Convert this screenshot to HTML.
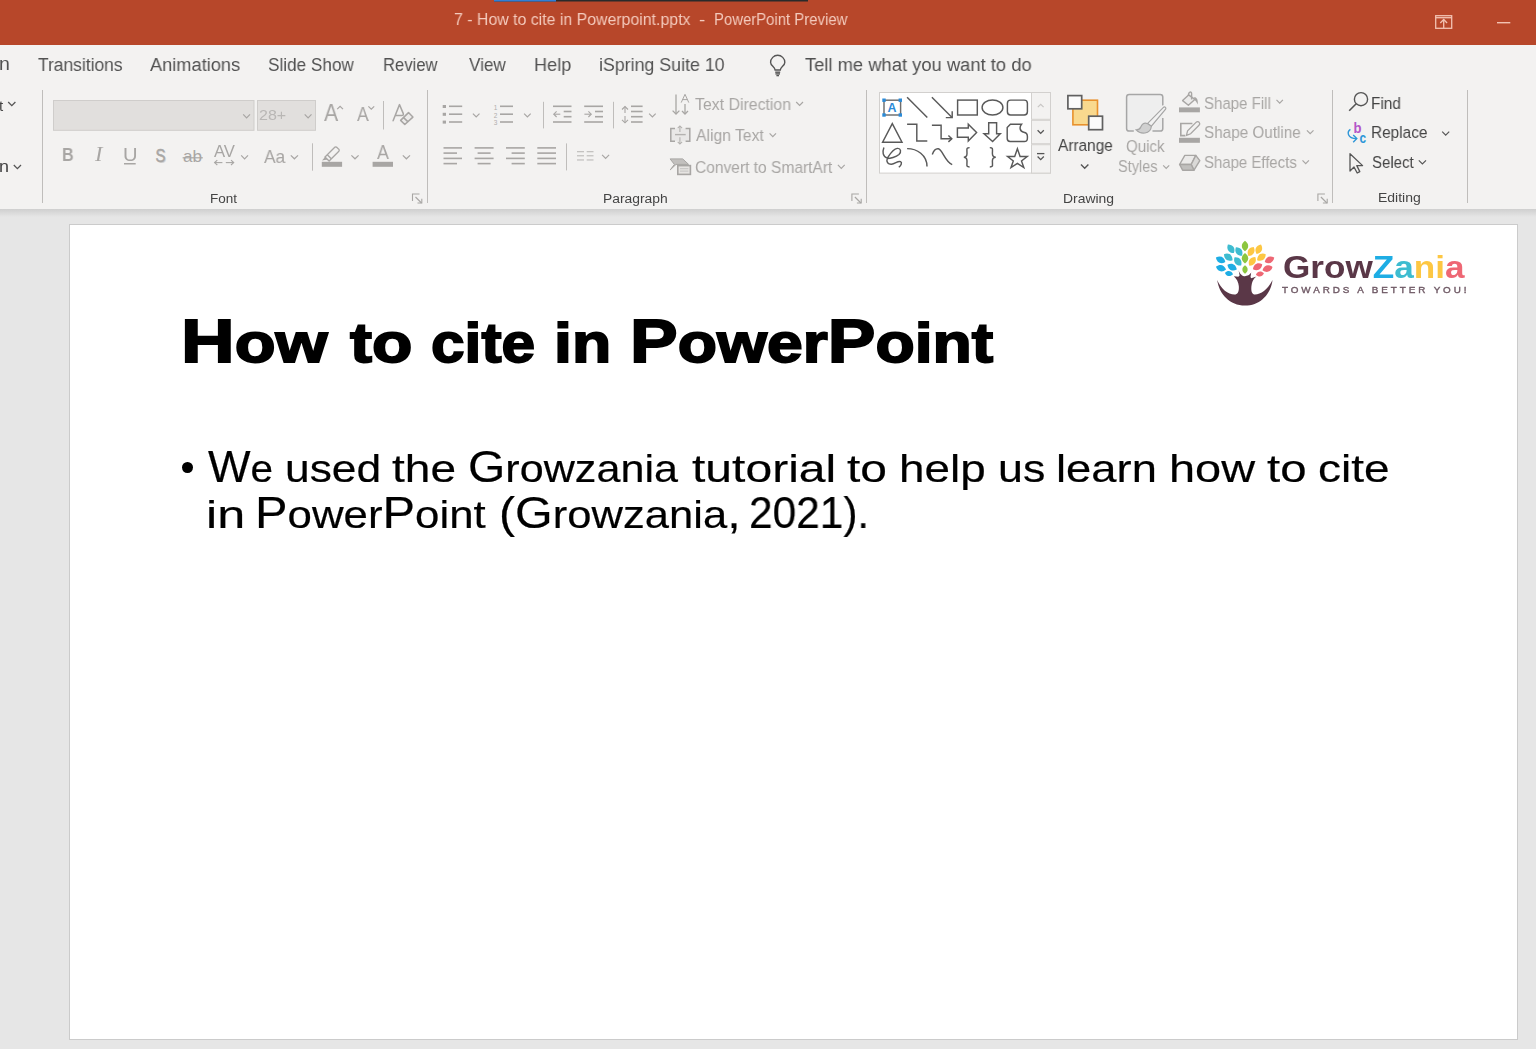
<!DOCTYPE html>
<html><head><meta charset="utf-8">
<style>
*{margin:0;padding:0;box-sizing:border-box}
html,body{width:1536px;height:1049px;overflow:hidden;background:#e6e6e6;font-family:"Liberation Sans",sans-serif}
.abs{position:absolute}
.t{position:absolute;white-space:nowrap;transform-origin:0 0;will-change:transform}
#title{left:0;top:0;width:1536px;height:45px;background:#b7472a}
#ribbon{left:0;top:45px;width:1536px;height:164px;background:#f3f2f1}
#shadow{left:0;top:209px;width:1536px;height:8px;background:linear-gradient(#cfcfcf,#e6e6e6)}
#slide{left:69px;top:224px;width:1449px;height:816px;background:#fff;border:1px solid #cbcbcb}
svg{position:absolute;left:0;top:0}
</style></head><body>
<div id="title" class="abs"></div>
<div id="ribbon" class="abs"></div>
<div id="shadow" class="abs"></div>
<div id="slide" class="abs"></div>
<svg width="1536" height="220" viewBox="0 0 1536 220">
<!-- title bar accents -->
<rect x="494" y="0" width="314" height="1.5" fill="#2a2a2a"/>
<rect x="494" y="0" width="62" height="1.5" fill="#2f7fd6"/>
<!-- title bar right icons -->
<g fill="none" stroke="#f2c2b2" stroke-width="1.3">
<rect x="1435.7" y="15.7" width="16" height="12.6"/>
<line x1="1435.7" y1="17.7" x2="1451.7" y2="17.7"/>
<line x1="1443.7" y1="28" x2="1443.7" y2="19.5"/>
<polyline points="1440.3,23 1443.7,19.5 1447.1,23"/>
</g>
<rect x="1497" y="22" width="13.3" height="1.4" fill="#f2c2b2"/>
<!-- separators -->
<g fill="#bfbdbb">
<rect x="42" y="90" width="1" height="113"/>
<rect x="427" y="90" width="1" height="113"/>
<rect x="866" y="90" width="1" height="113"/>
<rect x="1332" y="90" width="1" height="113"/>
<rect x="1467" y="90" width="1" height="113"/>
<rect x="383" y="101" width="1" height="28.5"/>
<rect x="312" y="143.3" width="1" height="27.4"/>
<rect x="543" y="101.8" width="1" height="26.6"/>
<rect x="613" y="101.8" width="1" height="26.6"/>
<rect x="566" y="143.4" width="1" height="27"/>
</g>
<!-- lightbulb -->
<g fill="none" stroke="#555" stroke-width="1.4">
<path d="M775.1,70 C774.8,67 770.6,65.4 770.6,62.4 A7.1,7.1 0 1 1 784.8,62.4 C784.8,65.4 780.6,67 780.3,70 Z"/>
<line x1="775.2" y1="72.2" x2="780.2" y2="72.2"/>
<line x1="775.4" y1="73.9" x2="780" y2="73.9"/>
<line x1="776.4" y1="75.6" x2="779" y2="75.6"/>
</g>
<!-- left partial chevrons -->
<g fill="none" stroke="#555" stroke-width="1.3">
<polyline points="8.2,102 11.8,105.6 15.4,102"/>
<polyline points="13.8,165 17.4,168.6 21,165"/>
</g>
<!-- font comboboxes -->
<rect x="53.5" y="100.5" width="200.5" height="29.8" fill="#e1dfdd" stroke="#cfcdcb" stroke-width="1"/>
<rect x="257.5" y="100.5" width="58" height="29.8" fill="#e1dfdd" stroke="#cfcdcb" stroke-width="1"/>
<g fill="none" stroke="#a8a6a4" stroke-width="1.2">
<polyline points="243.2,114.4 246.6,117.8 250,114.4"/>
<polyline points="304.7,114.4 308.1,117.8 311.5,114.4"/>
<!-- grow / shrink carets -->
<polyline points="337.2,109.2 340.1,106.3 343,109.2"/>
<polyline points="368.4,106.3 371.3,109.2 374.2,106.3"/>
<!-- chevrons row 2 -->
<polyline points="241.2,155.4 244.6,158.8 248,155.4"/>
<polyline points="290.8,155.4 294.4,158.8 298,155.4"/>
<polyline points="351.4,155.4 355,158.8 358.6,155.4"/>
<polyline points="402.8,155.4 406.4,158.8 410,155.4"/>
</g>
<!-- clear formatting -->
<g fill="none" stroke="#a8a6a4" stroke-width="1.5" stroke-linejoin="round" stroke-linecap="round">
<path d="M393.1,120.7 L399.5,104.6 L403.3,113.6 Q403.8,115.4 401.8,115.4 L395.7,115.4"/>
<path d="M408.5,112.6 L412.9,117.1 L404.8,124.5 L400.6,120.4 Z" fill="#ecebea"/>
<line x1="403.6" y1="117.6" x2="407.8" y2="121.6"/>
</g>
<!-- underline for U -->
<rect x="124" y="163" width="11.7" height="1.5" fill="#a8a6a4"/>
<!-- S with shadow -->
<text x="156.6" y="162.8" font-family="Liberation Sans" font-size="18.5" fill="#d6d4d2" textLength="10" lengthAdjust="spacingAndGlyphs">S</text>
<text x="155.6" y="161.6" font-family="Liberation Sans" font-size="18.5" fill="#a8a6a4" stroke="#a8a6a4" stroke-width="0.5" textLength="10" lengthAdjust="spacingAndGlyphs">S</text>
<!-- ab strike -->
<text x="183" y="161.5" font-family="Liberation Sans" font-size="17" fill="#a8a6a4" textLength="19" lengthAdjust="spacingAndGlyphs">ab</text>
<rect x="182.6" y="157.2" width="20.2" height="1.2" fill="#a8a6a4"/>
<!-- AV arrows -->
<g fill="none" stroke="#a8a6a4" stroke-width="1.1">
<line x1="214.5" y1="162.6" x2="222.4" y2="162.6"/>
<line x1="225.8" y1="162.6" x2="233.8" y2="162.6"/>
<polyline points="217.3,160.2 214.6,162.6 217.3,165"/>
<polyline points="231,160.2 233.7,162.6 231,165"/>
</g>
<!-- highlighter -->
<g fill="none" stroke="#a8a6a4" stroke-width="1.3">
<path d="M325,157 L334.5,147.5 A1.6,1.6 0 0 1 337,147.5 L338.6,149.1 A1.6,1.6 0 0 1 338.6,151.6 L329.1,161 Z"/>
<line x1="327.3" y1="154.8" x2="331.3" y2="158.8"/>
</g>
<path d="M322,160.5 L325,157 L327.7,159.6 Z" fill="#a8a6a4"/>
<rect x="321.8" y="161.8" width="20.3" height="5" fill="#a8a6a4"/>
<rect x="372.6" y="161.8" width="20.4" height="5" fill="#a8a6a4"/>
<!-- dialog launchers -->
<g fill="none" stroke="#a8a6a4" stroke-width="1.1">
<polyline points="412.5,201 412.5,194 419.5,194"/>
<line x1="415.5" y1="197" x2="421.5" y2="203"/>
<polyline points="417.5,203 421.8,203 421.8,198.7"/>
<polyline points="851.9,201 851.9,194 858.9,194"/>
<line x1="854.9" y1="197" x2="860.9" y2="203"/>
<polyline points="856.9,203 861.2,203 861.2,198.7"/>
<polyline points="1317.9,201 1317.9,194 1324.9,194"/>
<line x1="1320.9" y1="197" x2="1326.9" y2="203"/>
<polyline points="1322.9,203 1327.2,203 1327.2,198.7"/>
</g>

<!-- paragraph group -->
<g fill="#a8a6a4">
<!-- bullets -->
<rect x="442.7" y="105" width="3.3" height="3" /><rect x="442.7" y="112.8" width="3.3" height="3" /><rect x="442.7" y="120.6" width="3.3" height="3" />
<rect x="449" y="105.5" width="13.2" height="1.6"/><rect x="449" y="113.4" width="13.2" height="1.6"/><rect x="449" y="121.2" width="13.2" height="1.6"/>
<!-- numbering -->
<rect x="500" y="105.5" width="13" height="1.6"/><rect x="500" y="113.4" width="13" height="1.6"/><rect x="500" y="121.2" width="13" height="1.6"/>
<!-- decrease indent -->
<rect x="553" y="105.5" width="18.5" height="1.6"/><rect x="563.7" y="110.7" width="7.8" height="1.6"/><rect x="563.7" y="115.9" width="7.8" height="1.6"/><rect x="553" y="121.2" width="18.5" height="1.6"/>
<!-- increase indent -->
<rect x="584.2" y="105.5" width="18.8" height="1.6"/><rect x="595" y="110.7" width="8" height="1.6"/><rect x="595" y="115.9" width="8" height="1.6"/><rect x="584.2" y="121.2" width="18.8" height="1.6"/>
<!-- line spacing lines -->
<rect x="631" y="105.5" width="11.6" height="1.6"/><rect x="631" y="110.7" width="11.6" height="1.6"/><rect x="631" y="115.9" width="11.6" height="1.6"/><rect x="631" y="121.2" width="11.6" height="1.6"/>
<!-- align left -->
<rect x="443.5" y="147.1" width="18.5" height="1.6"/><rect x="443.5" y="152.3" width="13.5" height="1.6"/><rect x="443.5" y="157.6" width="18.5" height="1.6"/><rect x="443.5" y="162.8" width="13.5" height="1.6"/>
<!-- center -->
<rect x="474.6" y="147.1" width="19" height="1.6"/><rect x="477.6" y="152.3" width="13" height="1.6"/><rect x="474.6" y="157.6" width="19" height="1.6"/><rect x="477.6" y="162.8" width="13" height="1.6"/>
<!-- right -->
<rect x="506" y="147.1" width="18.8" height="1.6"/><rect x="511.6" y="152.3" width="13.2" height="1.6"/><rect x="506" y="157.6" width="18.8" height="1.6"/><rect x="511.6" y="162.8" width="13.2" height="1.6"/>
<!-- justify -->
<rect x="537.3" y="147.1" width="18.7" height="1.6"/><rect x="537.3" y="152.3" width="18.7" height="1.6"/><rect x="537.3" y="157.6" width="18.7" height="1.6"/><rect x="537.3" y="162.8" width="18.7" height="1.6"/>
</g>
<g fill="#c4c2c0">
<!-- columns -->
<rect x="577" y="151" width="7" height="1.3"/><rect x="586.7" y="151" width="6.8" height="1.3"/>
<rect x="577" y="155.1" width="7" height="1.3"/><rect x="586.7" y="155.1" width="6.8" height="1.3"/>
<rect x="577" y="159.3" width="7" height="1.3"/><rect x="586.7" y="159.3" width="6.8" height="1.3"/>
</g>
<g font-family="Liberation Sans" font-size="6.5" fill="#b0aeac">
<text x="493.8" y="110">1</text><text x="493.8" y="117.8">2</text><text x="493.8" y="125.4">3</text>
</g>
<g fill="none" stroke="#a8a6a4" stroke-width="1.2">
<polyline points="472.9,113.6 476.2,116.9 479.5,113.6"/>
<polyline points="524.1,113.6 527.4,116.9 530.7,113.6"/>
<polyline points="649.1,113.6 652.4,116.9 655.7,113.6"/>
<polyline points="602.1,154.8 605.6,158.3 609.1,154.8"/>
<polyline points="796.2,102 799.6,105.4 803,102"/>
<polyline points="769.6,133.3 772.8,136.6 776,133.3"/>
<polyline points="837.9,164.9 841.3,168.3 844.7,164.9"/>
</g>
<g fill="none" stroke="#a8a6a4" stroke-width="1.1">
<!-- decrease indent arrow -->
<line x1="553.8" y1="114.2" x2="560.3" y2="114.2"/><polyline points="556.6,111.4 553.8,114.2 556.6,117"/>
<!-- increase indent arrow -->
<line x1="584.4" y1="114.2" x2="591.2" y2="114.2"/><polyline points="588.4,111.4 591.2,114.2 588.4,117"/>
<!-- line spacing arrows -->
<line x1="625" y1="106.5" x2="625" y2="113"/><line x1="625" y1="116" x2="625" y2="122.8"/><polyline points="622,109.5 625,106.5 628,109.5"/><polyline points="622,119.8 625,122.8 628,119.8"/>
</g>
<!-- text direction icon -->
<g fill="none" stroke="#a8a6a4" stroke-width="1.3">
<line x1="676" y1="94.5" x2="676" y2="114"/><polyline points="672.6,110.6 676,114 679.4,110.6"/>
<line x1="685" y1="104" x2="685" y2="114"/><polyline points="682,111 685,114 688,111"/>
<path d="M681.2,102.6 L685,94.3 L688.8,102.6 M682.6,99.6 L687.4,99.6" stroke-width="1"/>
</g>
<!-- align text icon -->
<rect x="670.8" y="128.4" width="19" height="12.8" fill="#e9e8e7"/>
<g fill="none" stroke="#a8a6a4" stroke-width="1.5">
<polyline points="675,128.4 670.8,128.4 670.8,141.2 675,141.2"/>
<polyline points="685.6,128.4 689.8,128.4 689.8,141.2 685.6,141.2"/>
</g>
<g fill="none" stroke="#b4b2b0" stroke-width="1.1">
<line x1="675" y1="134.6" x2="685.7" y2="134.6" stroke-width="1.4"/>
<line x1="679.9" y1="126" x2="679.9" y2="132"/>
<line x1="679.9" y1="137.2" x2="679.9" y2="144"/>
<polyline points="677.7,128.2 679.9,126 682.1,128.2"/>
<polyline points="677.7,141.8 679.9,144 682.1,141.8"/>
</g>
<!-- smartart icon -->
<path d="M670.1,158.9 L682.7,158.9 L688.6,164.4 L676,164.4 L670.3,169.8 L674.4,164.4 Z" fill="#c2c0be" stroke="#a8a6a4" stroke-width="1" stroke-linejoin="round"/>
<rect x="677.8" y="165.6" width="12.6" height="8.8" fill="#e6e4e2" stroke="#a8a6a4" stroke-width="1.6"/>
<rect x="680" y="168.2" width="8.4" height="1" fill="#c4c2c0"/><rect x="680" y="170.6" width="8.4" height="1" fill="#c4c2c0"/>
<!-- drawing gallery -->
<rect x="879.5" y="92.5" width="171" height="80.6" fill="#ffffff" stroke="#d2d0ce" stroke-width="1"/>
<rect x="1031.5" y="92.5" width="19" height="26.8" fill="#f3f2f1" stroke="#d2d0ce" stroke-width="1"/>
<rect x="1031.5" y="120.3" width="19" height="23.4" fill="#f3f2f1" stroke="#d2d0ce" stroke-width="1"/>
<rect x="1031.5" y="144.7" width="19" height="28.4" fill="#f3f2f1" stroke="#d2d0ce" stroke-width="1"/>
<g fill="none" stroke="#c8c6c4" stroke-width="1.2"><polyline points="1037.8,107.2 1040.7,104.3 1043.6,107.2"/></g>
<g fill="none" stroke="#555" stroke-width="1.3">
<polyline points="1037.6,130.3 1040.7,133.4 1043.8,130.3"/>
<line x1="1037" y1="153.6" x2="1044.4" y2="153.6"/>
<polyline points="1037.6,156.5 1040.7,159.6 1043.8,156.5"/>
</g>
<g transform="translate(879,92)" fill="none" stroke="#595959" stroke-width="1.45" stroke-linejoin="miter">
<!-- row 1 -->
<rect x="5" y="8.2" width="16.6" height="14.8" stroke="#6d6d6d"/>
<line x1="28.1" y1="5.3" x2="48.3" y2="25.5"/>
<line x1="52.9" y1="5.3" x2="72.8" y2="25.2"/>
<polyline points="66.8,25.6 73.2,25.6 73.2,19.2" />
<rect x="78.6" y="8.1" width="19.7" height="14.9"/>
<ellipse cx="113.5" cy="15.5" rx="10.4" ry="7.5"/>
<rect x="128.4" y="8.1" width="20" height="14.9" rx="3.2"/>
<!-- row 2 -->
<path d="M13.3,31.6 L23,50.2 L3.6,50.2 Z"/>
<polyline points="28.1,32.2 37.8,32.2 37.8,49 48.3,49"/>
<polyline points="52.9,33.2 62.1,33.2 62.1,46.7 72.8,46.7"/>
<polyline points="69.4,43.5 72.8,46.7 69.4,49.9"/>
<path d="M78.4,36 L89.3,36 L89.3,32.2 L97.6,40.6 L89.3,49 L89.3,45.2 L78.4,45.2 Z"/>
<path d="M109.7,30.8 L117.6,30.8 L117.6,41.8 L121.3,41.8 L113.6,49.6 L105,41.8 L109.7,41.8 Z"/>
<path d="M131.4,32.2 L142.5,32.2 C140.2,35 140.6,39.6 144.8,40.2 C147.6,40.6 148.4,42.4 148.4,44.5 L148.4,46.2 C148.4,48 147.3,49.5 145.3,49.5 L131.1,49.5 C129.3,49.5 128.2,48.5 128.2,46.3 L128.2,35.6 Z"/>
<!-- row 3 -->
<path d="M4.9,55.6 C3.3,60 3.6,64.5 8.3,66.1 C11,62 14,57 18.2,56.4 C22,56 22.5,60 20,62.5 C17,65 11,66.5 8.3,66.6 C7,70 9,72.5 12.5,72.3 C16,72 19,68.5 21.5,69.6 C23.5,70.6 22,73.5 19.8,75.2"/>
<path d="M28.1,56.6 C38,56.6 48,63 48,74.5"/>
<path d="M53.3,62.5 C55,57.5 57.5,56.6 59.3,56.8 C63.5,57.5 66,70 73.2,72.6"/>
<path d="M90.6,55.6 C87,55.6 88,57 88,61.5 C88,64.5 87,65.2 84.8,65.2 C87,65.2 88,66 88,69 C88,73.6 87,75 90.6,75"/>
<path d="M110.8,55.6 C114.4,55.6 113.4,57 113.4,61.5 C113.4,64.5 114.4,65.2 116.8,65.2 C114.4,65.2 113.4,66 113.4,69 C113.4,73.6 114.4,75 110.8,75"/>
<path d="M138.4,56.8 L141.1,64.5 L148.2,64.5 L142.5,68.9 L144.8,75.6 L138.4,71.4 L132,75.6 L134.3,68.9 L128.6,64.5 L135.7,64.5 Z"/>
</g>
<!-- text box handles & A -->
<g fill="#2a8ad8">
<rect x="882.3" y="98.5" width="3.4" height="3.4"/><rect x="898.6" y="98.5" width="3.4" height="3.4"/>
<rect x="882.3" y="113.3" width="3.4" height="3.4"/><rect x="898.6" y="113.3" width="3.4" height="3.4"/>
</g>
<text x="887.6" y="111.9" font-family="Liberation Sans" font-weight="bold" font-size="12" fill="#2a8ad8" textLength="9" lengthAdjust="spacingAndGlyphs">A</text>
<!-- arrange icon -->
<rect x="1072.9" y="100.2" width="24.6" height="24.6" fill="#f9d98e" stroke="#e8912d" stroke-width="1.6"/>
<rect x="1067.9" y="95.6" width="13.8" height="13.2" fill="#fbfbfb" stroke="#606060" stroke-width="1.7"/>
<rect x="1088.7" y="116.2" width="13.8" height="13.5" fill="#fbfbfb" stroke="#606060" stroke-width="1.7"/>
<g fill="none" stroke="#555" stroke-width="1.4"><polyline points="1081,164.6 1084.7,168.3 1088.4,164.6"/></g>
<!-- quick styles -->
<rect x="1126.6" y="94.4" width="36.2" height="36.6" rx="2.6" fill="#eeeeee"/>
<path d="M1162.8,105.6 L1162.8,97 Q1162.8,94.4 1160.2,94.4 L1129.2,94.4 Q1126.6,94.4 1126.6,97 L1126.6,128.4 Q1126.6,131 1129.2,131 L1133.8,131 M1152.5,131 L1160.2,131 Q1162.8,131 1162.8,128.4 L1162.8,118.1" fill="none" stroke="#a6a6a6" stroke-width="1.5"/>
<path d="M1147.4,123.6 L1163.2,107.6 C1164.6,106.2 1166.6,107.4 1165.6,109.2 L1151.4,126.2 Z" fill="none" stroke="#f3f2f1" stroke-width="3.2"/>
<path d="M1147.4,123.6 L1163.2,107.6 C1164.6,106.2 1166.6,107.4 1165.6,109.2 L1151.4,126.2 Z" fill="#f2f2f2" stroke="#a6a6a6" stroke-width="1.2"/>
<path d="M1147.4,123.6 C1144,122.2 1141.8,124.4 1140.8,127 C1140,129 1138.6,129.8 1136.2,129.9 C1138.6,132.6 1142,133.4 1145,133 C1148.6,132.4 1151,129.8 1151.4,126.2 Z" fill="#d0d0d0" stroke="#a6a6a6" stroke-width="1.2"/>
<g fill="none" stroke="#a8a6a4" stroke-width="1.2">
<polyline points="1163.2,165.4 1166.2,168.4 1169.2,165.4"/>
<polyline points="1276.5,99.9 1279.7,103.1 1282.9,99.9"/>
<polyline points="1306.9,130.3 1310.2,133.6 1313.5,130.3"/>
<polyline points="1302.5,160.3 1305.7,163.6 1308.9,160.3"/>
</g>
<!-- shape fill icon -->
<g fill="none" stroke="#a8a6a4" stroke-width="1.4" stroke-linejoin="round">
<path d="M1182.6,100.6 L1188.6,94.9 L1194.8,99.4 L1188.4,105.3 Z" fill="#ecebea"/>
<path d="M1188.4,95.6 C1188.4,91.2 1191.6,91.2 1191.6,93.6 L1191.6,99.4"/>
</g>
<path d="M1194.2,97 C1197.2,97.4 1198.2,100.4 1197.8,104.6 C1196.8,102.2 1195.2,100.8 1194.4,99.6 Z" fill="#a8a6a4"/>
<rect x="1179" y="107.4" width="20.9" height="4.9" fill="#a8a6a4"/>
<!-- shape outline icon -->
<g fill="none" stroke="#a8a6a4" stroke-width="1.3">
<polyline points="1192.4,123.5 1180.8,123.5 1180.8,135.6 1185.2,135.6" stroke-width="1.6"/>
<path d="M1186.4,135.4 L1187.6,130.8 L1196,122.4 C1197,121.4 1198.4,121.4 1199.2,122.4 C1200,123.3 1199.9,124.4 1199,125.3 L1190.6,133.8 Z"/>
</g>
<rect x="1179" y="137.8" width="20.9" height="5" fill="#a8a6a4"/>
<!-- shape effects icon -->
<g stroke="#a8a6a4" stroke-width="1.4" stroke-linejoin="round">
<path d="M1179.6,164.5 L1184.8,155.4 L1195.8,155.4 L1191.2,164.5 Z" fill="#ebeae9"/>
<path d="M1191.2,164.5 L1195.8,155.4 L1199.8,160.6 L1194,170.2 Z" fill="#dad9d7"/>
<path d="M1179.6,164.5 L1191.2,164.5 L1194,170.2 L1182.6,170.2 Z" fill="#c0bfbd"/>
</g>

<!-- editing icons -->
<g fill="none" stroke="#555" stroke-width="1.4">
<circle cx="1361" cy="99.2" r="6.6"/>
<line x1="1349.2" y1="110.8" x2="1356.2" y2="103.8" stroke-width="1.6"/>
</g>
<text x="1353.6" y="132.6" font-family="Liberation Sans" font-weight="bold" font-size="14" fill="#b455c8" textLength="8" lengthAdjust="spacingAndGlyphs">b</text>
<text x="1359.4" y="143" font-family="Liberation Sans" font-weight="bold" font-size="15.5" fill="#2e96d8" textLength="6.6" lengthAdjust="spacingAndGlyphs">c</text>
<g fill="none" stroke="#2e96d8" stroke-width="1.4">
<path d="M1350.4,129.4 C1347,131.5 1346.8,138.6 1356.6,138.6"/>
<polyline points="1353.2,135 1356.8,138.6 1353.2,142.2"/>
</g>
<g fill="none" stroke="#555" stroke-width="1.2"><polyline points="1442.2,131.6 1445.7,135.1 1449.2,131.6"/>
<polyline points="1418.8,160.3 1422.4,163.9 1426,160.3"/></g>
<path d="M1350,153.8 L1350,171 L1354,167 L1357.2,173 L1359.8,171.6 L1356.8,165.6 L1362.6,165.6 Z" fill="#f3f2f1" stroke="#555" stroke-width="1.3" stroke-linejoin="round"/>
</svg>

<svg width="80" height="80" viewBox="0 0 80 80" style="left:1205px;top:232px"><path d="M0,-5.4 C4.73,-2.43 4.73,2.43 0,5.4 C-4.73,2.43 -4.73,-2.43 0,-5.4 Z" transform="translate(40 14.1) rotate(0) scale(0.9 0.97)" fill="#8cc63f"/><path d="M0,-5.4 C4.73,-2.43 4.73,2.43 0,5.4 C-4.73,2.43 -4.73,-2.43 0,-5.4 Z" transform="translate(40 26.3) rotate(0) scale(0.9 0.97)" fill="#8cc63f"/><path d="M0,-4.4 C3.92,-1.98 3.92,1.98 0,4.4 C-3.92,1.98 -3.92,-1.98 0,-4.4 Z" transform="translate(40 37.4) rotate(0) scale(0.9 0.97)" fill="#8cc63f"/><path d="M0,-5.4 C4.73,-2.43 4.73,2.43 0,5.4 C-4.73,2.43 -4.73,-2.43 0,-5.4 Z" transform="translate(25.9 16.8) rotate(-35) scale(0.9 0.97)" fill="#3ebcd0"/><path d="M0,-5.4 C4.73,-2.43 4.73,2.43 0,5.4 C-4.73,2.43 -4.73,-2.43 0,-5.4 Z" transform="translate(33.9 19.5) rotate(-35) scale(0.9 0.97)" fill="#3ebcd0"/><path d="M0,-5.4 C4.73,-2.43 4.73,2.43 0,5.4 C-4.73,2.43 -4.73,-2.43 0,-5.4 Z" transform="translate(23.3 25.2) rotate(-55) scale(0.9 0.97)" fill="#3ebcd0"/><path d="M0,-5.4 C4.73,-2.43 4.73,2.43 0,5.4 C-4.73,2.43 -4.73,-2.43 0,-5.4 Z" transform="translate(32.8 29.4) rotate(-40) scale(0.9 0.97)" fill="#3ebcd0"/><path d="M0,-5.4 C4.73,-2.43 4.73,2.43 0,5.4 C-4.73,2.43 -4.73,-2.43 0,-5.4 Z" transform="translate(15.6 27.8) rotate(-65) scale(0.9 0.97)" fill="#1eade4"/><path d="M0,-5.4 C4.73,-2.43 4.73,2.43 0,5.4 C-4.73,2.43 -4.73,-2.43 0,-5.4 Z" transform="translate(16 36.2) rotate(-75) scale(0.9 0.97)" fill="#1eade4"/><path d="M0,-5.4 C4.73,-2.43 4.73,2.43 0,5.4 C-4.73,2.43 -4.73,-2.43 0,-5.4 Z" transform="translate(27.1 35.1) rotate(-62) scale(0.9 0.97)" fill="#1eade4"/><path d="M0,-4.2 C3.65,-1.89 3.65,1.89 0,4.2 C-3.65,1.89 -3.65,-1.89 0,-4.2 Z" transform="translate(24 41.6) rotate(-80) scale(0.9 0.97)" fill="#1eade4"/><path d="M0,-5.4 C4.73,-2.43 4.73,2.43 0,5.4 C-4.73,2.43 -4.73,-2.43 0,-5.4 Z" transform="translate(46.1 19.5) rotate(30) scale(0.9 0.97)" fill="#fdc743"/><path d="M0,-5.4 C4.73,-2.43 4.73,2.43 0,5.4 C-4.73,2.43 -4.73,-2.43 0,-5.4 Z" transform="translate(53.8 17.2) rotate(25) scale(0.9 0.97)" fill="#fdc743"/><path d="M0,-5.4 C4.73,-2.43 4.73,2.43 0,5.4 C-4.73,2.43 -4.73,-2.43 0,-5.4 Z" transform="translate(56.4 25.2) rotate(55) scale(0.9 0.97)" fill="#fdc743"/><path d="M0,-5.4 C4.73,-2.43 4.73,2.43 0,5.4 C-4.73,2.43 -4.73,-2.43 0,-5.4 Z" transform="translate(47.3 29.4) rotate(35) scale(0.9 0.97)" fill="#fdc743"/><path d="M0,-5.4 C4.73,-2.43 4.73,2.43 0,5.4 C-4.73,2.43 -4.73,-2.43 0,-5.4 Z" transform="translate(64.5 27.8) rotate(65) scale(0.9 0.97)" fill="#ee6774"/><path d="M0,-5.4 C4.73,-2.43 4.73,2.43 0,5.4 C-4.73,2.43 -4.73,-2.43 0,-5.4 Z" transform="translate(52.6 34.7) rotate(62) scale(0.9 0.97)" fill="#ee6774"/><path d="M0,-5.4 C4.73,-2.43 4.73,2.43 0,5.4 C-4.73,2.43 -4.73,-2.43 0,-5.4 Z" transform="translate(62.5 36.6) rotate(72) scale(0.9 0.97)" fill="#ee6774"/><path d="M0,-4.2 C3.65,-1.89 3.65,1.89 0,4.2 C-3.65,1.89 -3.65,-1.89 0,-4.2 Z" transform="translate(54.9 42) rotate(80) scale(0.9 0.97)" fill="#ee6774"/>
<path d="M12.2,48 C14,62 25,73.6 40,73.6 C55,73.6 66,62 67.5,48 C63,57 56,62.5 50,62.5 C46.5,62.5 45.8,58 46.6,53 C47.5,48 49.5,46 51.5,44.5 L48.5,45.4 L46.2,46.3 L45.5,45 L46.2,40.6 C45,42.8 42,44.2 40,44.2 C37.5,44.2 35,42.5 33.6,38.2 L34.6,43.5 L33.3,44.8 L28.8,44.2 C31.5,46.5 33.5,50 33.8,54 C34.2,59 33,62.6 29.5,62.6 C23,62.6 16,57 12.2,48 Z" fill="#5a3747"/>
</svg>
<div class="abs" style="left:182.3px;top:462.2px;width:10.8px;height:10.8px;border-radius:50%;background:#000"></div>
<div class="t" style="left:454.21px;top:11.71px;font-size:16.81px;line-height:16.81px;color:#f4cbbd;font-weight:normal;font-family:'Liberation Sans';transform:scaleX(0.9450);">7 - How to cite in Powerpoint.pptx</div>
<div class="t" style="left:699.35px;top:11.64px;font-size:16.90px;line-height:16.90px;color:#f4cbbd;font-weight:normal;font-family:'Liberation Sans';transform:scaleX(1.1124);">-</div>
<div class="t" style="left:713.51px;top:11.86px;font-size:16.52px;line-height:16.52px;color:#f4cbbd;font-weight:normal;font-family:'Liberation Sans';transform:scaleX(0.9022);">PowerPoint Preview</div>
<div class="t" style="left:-1.17px;top:55.26px;font-size:18.52px;line-height:18.52px;color:#525252;font-weight:normal;font-family:'Liberation Sans';transform:scaleX(1.0555);">n</div>
<div class="t" style="left:37.75px;top:54.74px;font-size:19.13px;line-height:19.13px;color:#525252;font-weight:normal;font-family:'Liberation Sans';transform:scaleX(0.9108);">Transitions</div>
<div class="t" style="left:150.40px;top:54.74px;font-size:19.13px;line-height:19.13px;color:#525252;font-weight:normal;font-family:'Liberation Sans';transform:scaleX(0.9536);">Animations</div>
<div class="t" style="left:267.81px;top:54.74px;font-size:19.13px;line-height:19.13px;color:#525252;font-weight:normal;font-family:'Liberation Sans';transform:scaleX(0.8981);">Slide Show</div>
<div class="t" style="left:383.37px;top:54.74px;font-size:19.13px;line-height:19.13px;color:#525252;font-weight:normal;font-family:'Liberation Sans';transform:scaleX(0.8705);">Review</div>
<div class="t" style="left:468.90px;top:54.74px;font-size:19.13px;line-height:19.13px;color:#525252;font-weight:normal;font-family:'Liberation Sans';transform:scaleX(0.8941);">View</div>
<div class="t" style="left:534.35px;top:54.74px;font-size:19.13px;line-height:19.13px;color:#525252;font-weight:normal;font-family:'Liberation Sans';transform:scaleX(0.9482);">Help</div>
<div class="t" style="left:599.03px;top:54.74px;font-size:19.13px;line-height:19.13px;color:#525252;font-weight:normal;font-family:'Liberation Sans';transform:scaleX(0.9308);">iSpring Suite 10</div>
<div class="t" style="left:805.23px;top:54.86px;font-size:18.99px;line-height:18.99px;color:#505050;font-weight:normal;font-family:'Liberation Sans';transform:scaleX(0.9674);">Tell me what you want to do</div>
<div class="t" style="left:-1.15px;top:98.05px;font-size:15.00px;line-height:15.00px;color:#444444;font-weight:normal;font-family:'Liberation Sans';">t</div>
<div class="t" style="left:-1.08px;top:158.83px;font-size:16.67px;line-height:16.67px;color:#444444;font-weight:normal;font-family:'Liberation Sans';transform:scaleX(1.0773);">n</div>
<div class="t" style="left:209.92px;top:192.14px;font-size:13.48px;line-height:13.48px;color:#444444;font-weight:normal;font-family:'Liberation Sans';transform:scaleX(1.0031);">Font</div>
<div class="t" style="left:603.49px;top:191.91px;font-size:13.70px;line-height:13.70px;color:#444444;font-weight:normal;font-family:'Liberation Sans';transform:scaleX(1.0130);">Paragraph</div>
<div class="t" style="left:1062.89px;top:191.92px;font-size:13.62px;line-height:13.62px;color:#444444;font-weight:normal;font-family:'Liberation Sans';transform:scaleX(1.0226);">Drawing</div>
<div class="t" style="left:1377.88px;top:192.28px;font-size:12.61px;line-height:12.61px;color:#444444;font-weight:normal;font-family:'Liberation Sans';transform:scaleX(1.1103);">Editing</div>
<div class="t" style="left:259.20px;top:107.42px;font-size:15.51px;line-height:15.51px;color:#b9b7b5;font-weight:normal;font-family:'Liberation Sans';transform:scaleX(1.0343);">28+</div>
<div class="t" style="left:323.75px;top:100.78px;font-size:24.49px;line-height:24.49px;color:#a8a6a4;font-weight:normal;font-family:'Liberation Sans';transform:scaleX(0.8684);">A</div>
<div class="t" style="left:357.00px;top:105.09px;font-size:19.42px;line-height:19.42px;color:#a8a6a4;font-weight:normal;font-family:'Liberation Sans';transform:scaleX(0.8992);">A</div>
<div class="t" style="left:62.23px;top:145.69px;font-size:18.71px;line-height:18.71px;color:#a8a6a4;font-weight:bold;font-family:'Liberation Sans';transform:scaleX(0.8619);">B</div>
<div class="t" style="left:94.93px;top:144.47px;font-size:20.15px;line-height:20.15px;color:#a8a6a4;font-weight:normal;font-family:'Liberation Serif';font-style:italic;transform:scaleX(1.1196);">I</div>
<div class="t" style="left:122.59px;top:145.60px;font-size:18.12px;line-height:18.12px;color:#a8a6a4;font-weight:normal;font-family:'Liberation Sans';transform:scaleX(1.1135);">U</div>
<div class="t" style="left:213.80px;top:143.83px;font-size:16.67px;line-height:16.67px;color:#a8a6a4;font-weight:normal;font-family:'Liberation Sans';transform:scaleX(0.9931);">AV</div>
<div class="t" style="left:264.00px;top:147.12px;font-size:19.28px;line-height:19.28px;color:#a8a6a4;font-weight:normal;font-family:'Liberation Sans';transform:scaleX(0.9006);">Aa</div>
<div class="t" style="left:377.00px;top:143.42px;font-size:19.86px;line-height:19.86px;color:#a8a6a4;font-weight:normal;font-family:'Liberation Sans';transform:scaleX(0.8945);">A</div>
<div class="t" style="left:695.48px;top:97.05px;font-size:15.94px;line-height:15.94px;color:#a8a6a4;font-weight:normal;font-family:'Liberation Sans';transform:scaleX(0.9942);">Text Direction</div>
<div class="t" style="left:695.80px;top:127.71px;font-size:16.81px;line-height:16.81px;color:#a8a6a4;font-weight:normal;font-family:'Liberation Sans';transform:scaleX(0.9352);">Align Text</div>
<div class="t" style="left:695.02px;top:159.20px;font-size:16.23px;line-height:16.23px;color:#a8a6a4;font-weight:normal;font-family:'Liberation Sans';transform:scaleX(0.9583);">Convert to SmartArt</div>
<div class="t" style="left:1057.50px;top:138.45px;font-size:15.94px;line-height:15.94px;color:#444444;font-weight:normal;font-family:'Liberation Sans';transform:scaleX(0.9672);">Arrange</div>
<div class="t" style="left:1126.20px;top:138.95px;font-size:15.94px;line-height:15.94px;color:#a8a6a4;font-weight:normal;font-family:'Liberation Sans';transform:scaleX(0.9461);">Quick</div>
<div class="t" style="left:1117.82px;top:159.17px;font-size:15.80px;line-height:15.80px;color:#a8a6a4;font-weight:normal;font-family:'Liberation Sans';transform:scaleX(0.9210);">Styles</div>
<div class="t" style="left:1204.30px;top:94.83px;font-size:16.09px;line-height:16.09px;color:#a8a6a4;font-weight:normal;font-family:'Liberation Sans';transform:scaleX(0.9343);">Shape Fill</div>
<div class="t" style="left:1204.29px;top:124.61px;font-size:16.81px;line-height:16.81px;color:#a8a6a4;font-weight:normal;font-family:'Liberation Sans';transform:scaleX(0.9091);">Shape Outline</div>
<div class="t" style="left:1204.30px;top:154.99px;font-size:16.96px;line-height:16.96px;color:#a8a6a4;font-weight:normal;font-family:'Liberation Sans';transform:scaleX(0.8820);">Shape Effects</div>
<div class="t" style="left:1371.37px;top:94.70px;font-size:16.23px;line-height:16.23px;color:#444444;font-weight:normal;font-family:'Liberation Sans';transform:scaleX(0.9467);">Find</div>
<div class="t" style="left:1371.37px;top:124.56px;font-size:16.52px;line-height:16.52px;color:#444444;font-weight:normal;font-family:'Liberation Sans';transform:scaleX(0.9302);">Replace</div>
<div class="t" style="left:1372.00px;top:154.76px;font-size:16.52px;line-height:16.52px;color:#444444;font-weight:normal;font-family:'Liberation Sans';transform:scaleX(0.9096);">Select</div>
<div class="t" style="left:1283.39px;top:250.60px;font-size:32.00px;line-height:32.00px;color:#5a3747;font-weight:bold;font-family:'Liberation Sans';transform:scaleX(1.0977);"><span style="color:#5a3747">Grow</span><span style="color:#1eade4">Z</span><span style="color:#3ebcd0">a</span><span style="color:#fdc743">ni</span><span style="color:#ee6774">a</span></div>
<div class="t" style="left:1282.00px;top:284.82px;font-size:9.86px;line-height:9.86px;color:#6e5864;font-weight:normal;font-family:'Liberation Sans';letter-spacing:2.914px;-webkit-text-stroke:0.4px #6e5864;">TOWARDS A BETTER YOU!</div>
<div class="t" style="left:181.10px;top:309.90px;font-family:'Liberation Sans';font-weight:bold;font-size:62px;line-height:62px;color:#000;-webkit-text-stroke:1.8px #000;transform:scaleX(1.1992);">H<span style="font-size:0.9em">o</span><span style="font-size:0.9em">w</span></div>
<div class="t" style="left:349.50px;top:309.90px;font-family:'Liberation Sans';font-weight:bold;font-size:62px;line-height:62px;color:#000;-webkit-text-stroke:1.8px #000;transform:scaleX(1.1843);"><span style="font-size:0.9em">t</span><span style="font-size:0.9em">o</span></div>
<div class="t" style="left:430.82px;top:309.90px;font-family:'Liberation Sans';font-weight:bold;font-size:62px;line-height:62px;color:#000;-webkit-text-stroke:1.8px #000;transform:scaleX(1.0819);"><span style="font-size:0.9em">c</span><span style="font-size:0.9em">i</span><span style="font-size:0.9em">t</span><span style="font-size:0.9em">e</span></div>
<div class="t" style="left:554.24px;top:309.90px;font-family:'Liberation Sans';font-weight:bold;font-size:62px;line-height:62px;color:#000;-webkit-text-stroke:1.8px #000;transform:scaleX(1.1523);"><span style="font-size:0.9em">i</span><span style="font-size:0.9em">n</span></div>
<div class="t" style="left:630.44px;top:309.90px;font-family:'Liberation Sans';font-weight:bold;font-size:62px;line-height:62px;color:#000;-webkit-text-stroke:1.8px #000;transform:scaleX(1.1521);">P<span style="font-size:0.9em">o</span><span style="font-size:0.9em">w</span><span style="font-size:0.9em">e</span><span style="font-size:0.9em">r</span>P<span style="font-size:0.9em">o</span><span style="font-size:0.9em">i</span><span style="font-size:0.9em">n</span><span style="font-size:0.9em">t</span></div>
<div class="t" style="left:207.80px;top:445.20px;font-family:'Liberation Sans';font-size:44px;line-height:44px;color:#000;-webkit-text-stroke:0.2px #000;transform:scaleX(1.0242);">W<span style="font-size:0.9em">e</span></div>
<div class="t" style="left:285.06px;top:445.20px;font-family:'Liberation Sans';font-size:44px;line-height:44px;color:#000;-webkit-text-stroke:0.2px #000;transform:scaleX(1.1210);"><span style="font-size:0.9em">u</span><span style="font-size:0.9em">s</span><span style="font-size:0.9em">e</span><span style="font-size:0.9em">d</span></div>
<div class="t" style="left:392.24px;top:445.20px;font-family:'Liberation Sans';font-size:44px;line-height:44px;color:#000;-webkit-text-stroke:0.2px #000;transform:scaleX(1.1635);"><span style="font-size:0.9em">t</span><span style="font-size:0.9em">h</span><span style="font-size:0.9em">e</span></div>
<div class="t" style="left:468.02px;top:445.20px;font-family:'Liberation Sans';font-size:44px;line-height:44px;color:#000;-webkit-text-stroke:0.2px #000;transform:scaleX(1.0901);">G<span style="font-size:0.9em">r</span><span style="font-size:0.9em">o</span><span style="font-size:0.9em">w</span><span style="font-size:0.9em">z</span><span style="font-size:0.9em">a</span><span style="font-size:0.9em">n</span><span style="font-size:0.9em">i</span><span style="font-size:0.9em">a</span></div>
<div class="t" style="left:692.49px;top:445.20px;font-family:'Liberation Sans';font-size:44px;line-height:44px;color:#000;-webkit-text-stroke:0.2px #000;transform:scaleX(1.2139);"><span style="font-size:0.9em">t</span><span style="font-size:0.9em">u</span><span style="font-size:0.9em">t</span><span style="font-size:0.9em">o</span><span style="font-size:0.9em">r</span><span style="font-size:0.9em">i</span><span style="font-size:0.9em">a</span><span style="font-size:0.9em">l</span></div>
<div class="t" style="left:847.19px;top:445.20px;font-family:'Liberation Sans';font-size:44px;line-height:44px;color:#000;-webkit-text-stroke:0.2px #000;transform:scaleX(1.2129);"><span style="font-size:0.9em">t</span><span style="font-size:0.9em">o</span></div>
<div class="t" style="left:899.23px;top:445.20px;font-family:'Liberation Sans';font-size:44px;line-height:44px;color:#000;-webkit-text-stroke:0.2px #000;transform:scaleX(1.1579);"><span style="font-size:0.9em">h</span><span style="font-size:0.9em">e</span><span style="font-size:0.9em">l</span><span style="font-size:0.9em">p</span></div>
<div class="t" style="left:998.04px;top:445.20px;font-family:'Liberation Sans';font-size:44px;line-height:44px;color:#000;-webkit-text-stroke:0.2px #000;transform:scaleX(1.1316);"><span style="font-size:0.9em">u</span><span style="font-size:0.9em">s</span></div>
<div class="t" style="left:1056.06px;top:445.20px;font-family:'Liberation Sans';font-size:44px;line-height:44px;color:#000;-webkit-text-stroke:0.2px #000;transform:scaleX(1.1458);"><span style="font-size:0.9em">l</span><span style="font-size:0.9em">e</span><span style="font-size:0.9em">a</span><span style="font-size:0.9em">r</span><span style="font-size:0.9em">n</span></div>
<div class="t" style="left:1168.74px;top:445.20px;font-family:'Liberation Sans';font-size:44px;line-height:44px;color:#000;-webkit-text-stroke:0.2px #000;transform:scaleX(1.1857);"><span style="font-size:0.9em">h</span><span style="font-size:0.9em">o</span><span style="font-size:0.9em">w</span></div>
<div class="t" style="left:1267.20px;top:445.20px;font-family:'Liberation Sans';font-size:44px;line-height:44px;color:#000;-webkit-text-stroke:0.2px #000;transform:scaleX(1.1968);"><span style="font-size:0.9em">t</span><span style="font-size:0.9em">o</span></div>
<div class="t" style="left:1318.38px;top:445.20px;font-family:'Liberation Sans';font-size:44px;line-height:44px;color:#000;-webkit-text-stroke:0.2px #000;transform:scaleX(1.1621);"><span style="font-size:0.9em">c</span><span style="font-size:0.9em">i</span><span style="font-size:0.9em">t</span><span style="font-size:0.9em">e</span></div>
<div class="t" style="left:206.38px;top:491.20px;font-family:'Liberation Sans';font-size:44px;line-height:44px;color:#000;-webkit-text-stroke:0.2px #000;transform:scaleX(1.2720);"><span style="font-size:0.9em">i</span><span style="font-size:0.9em">n</span></div>
<div class="t" style="left:255.17px;top:491.20px;font-family:'Liberation Sans';font-size:44px;line-height:44px;color:#000;-webkit-text-stroke:0.2px #000;transform:scaleX(1.1074);">P<span style="font-size:0.9em">o</span><span style="font-size:0.9em">w</span><span style="font-size:0.9em">e</span><span style="font-size:0.9em">r</span>P<span style="font-size:0.9em">o</span><span style="font-size:0.9em">i</span><span style="font-size:0.9em">n</span><span style="font-size:0.9em">t</span></div>
<div class="t" style="left:498.80px;top:491.20px;font-family:'Liberation Sans';font-size:44px;line-height:44px;color:#000;-webkit-text-stroke:0.2px #000;transform:scaleX(1.1005);">(G<span style="font-size:0.9em">r</span><span style="font-size:0.9em">o</span><span style="font-size:0.9em">w</span><span style="font-size:0.9em">z</span><span style="font-size:0.9em">a</span><span style="font-size:0.9em">n</span><span style="font-size:0.9em">i</span><span style="font-size:0.9em">a</span>,</div>
<div class="t" style="left:748.87px;top:491.20px;font-family:'Liberation Sans';font-size:44px;line-height:44px;color:#000;-webkit-text-stroke:0.2px #000;transform:scaleX(0.9630);">2021).</div>
</body></html>
